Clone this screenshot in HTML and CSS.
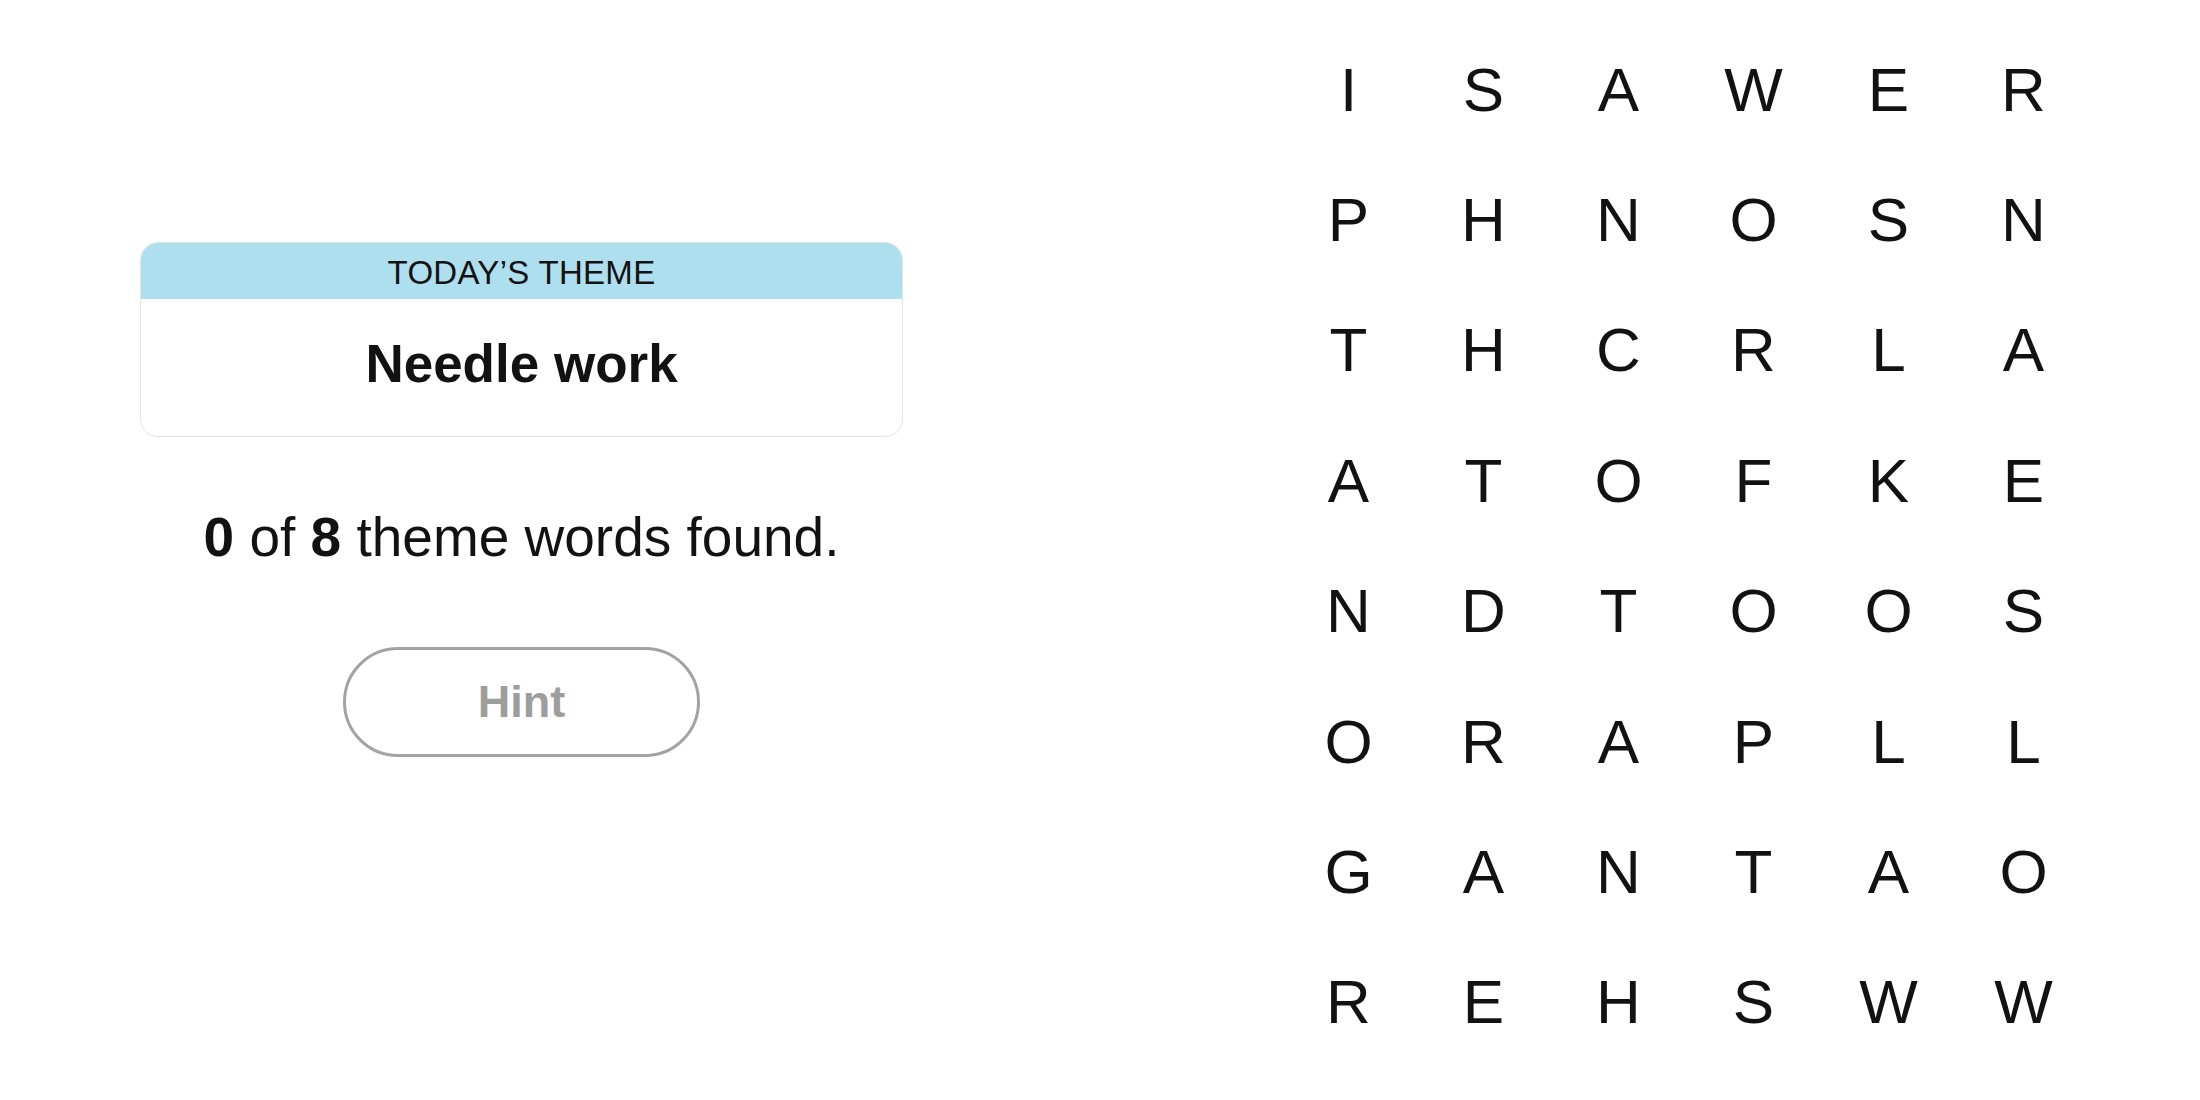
FILE: index.html
```html
<!DOCTYPE html>
<html lang="en">
<head>
<meta charset="utf-8">
<title>Strands</title>
<link rel="stylesheet" href="styles.css">
</head>
<body>
<main class="page">
  <section class="side">
    <div class="theme-card">
      <div class="theme-head">TODAY’S THEME</div>
      <div class="theme-body">Needle work</div>
    </div>
    <p class="progress"><b>0</b> of <b>8</b> theme words found.</p>
    <button class="hint" type="button">Hint</button>
  </section>
  <section class="board">
    <span class="cell">I</span><span class="cell">S</span><span class="cell">A</span><span class="cell">W</span><span class="cell">E</span><span class="cell">R</span>
    <span class="cell">P</span><span class="cell">H</span><span class="cell">N</span><span class="cell">O</span><span class="cell">S</span><span class="cell">N</span>
    <span class="cell">T</span><span class="cell">H</span><span class="cell">C</span><span class="cell">R</span><span class="cell">L</span><span class="cell">A</span>
    <span class="cell">A</span><span class="cell">T</span><span class="cell">O</span><span class="cell">F</span><span class="cell">K</span><span class="cell">E</span>
    <span class="cell">N</span><span class="cell">D</span><span class="cell">T</span><span class="cell">O</span><span class="cell">O</span><span class="cell">S</span>
    <span class="cell">O</span><span class="cell">R</span><span class="cell">A</span><span class="cell">P</span><span class="cell">L</span><span class="cell">L</span>
    <span class="cell">G</span><span class="cell">A</span><span class="cell">N</span><span class="cell">T</span><span class="cell">A</span><span class="cell">O</span>
    <span class="cell">R</span><span class="cell">E</span><span class="cell">H</span><span class="cell">S</span><span class="cell">W</span><span class="cell">W</span>
  </section>
</main>
</body>
</html>
```
FILE: styles.css
```css
html, body {
  margin: 0;
  padding: 0;
  background: #ffffff;
}

body {
  font-family: "Liberation Sans", Arial, sans-serif;
  color: #121212;
}

.page {
  display: flex;
  align-items: flex-start;
  width: 2200px;
  height: 1100px;
  overflow: hidden;
}

.side {
  width: 763px;
  margin-left: 140px;
  padding-top: 242px;
  display: flex;
  flex-direction: column;
  align-items: center;
}

.theme-card {
  width: 763px;
  height: 195px;
  box-sizing: border-box;
  border: 1.5px solid #e4e4e4;
  border-radius: 18px;
  overflow: hidden;
  display: flex;
  flex-direction: column;
  background: #ffffff;
}

.theme-head {
  height: 56px;
  flex: none;
  background: #aedfee;
  display: flex;
  align-items: center;
  justify-content: center;
  padding-top: 3px;
  box-sizing: border-box;
  font-size: 33px;
  font-weight: 400;
  letter-spacing: 0.3px;
  color: #121212;
}

.theme-body {
  flex: 1;
  display: flex;
  align-items: center;
  justify-content: center;
  padding-bottom: 8px;
  font-size: 53px;
  font-weight: 700;
  color: #121212;
}

.progress {
  margin: 69px 0 0;
  font-size: 55px;
  line-height: 63px;
  color: #121212;
  white-space: nowrap;
}

.progress b {
  font-weight: 700;
}

.hint {
  margin-top: 78px;
  width: 357px;
  height: 110px;
  box-sizing: border-box;
  border: 3.5px solid #a3a3a3;
  border-radius: 55px;
  background: #ffffff;
  color: #9d9d9d;
  font-family: "Liberation Sans", Arial, sans-serif;
  font-size: 45px;
  font-weight: 700;
  padding: 0;
}

.board {
  margin-left: 378px;
  padding-top: 24px;
  display: grid;
  grid-template-columns: repeat(6, 135px);
  grid-auto-rows: 130.4px;
}

.cell {
  display: flex;
  align-items: center;
  justify-content: center;
  font-size: 62px;
  font-weight: 400;
  color: #121212;
}
```
